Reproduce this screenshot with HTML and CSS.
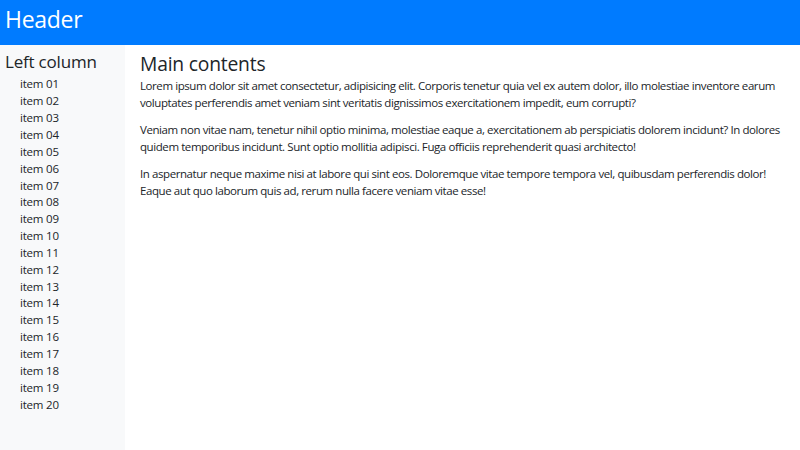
FILE: index.html
```html
<!DOCTYPE html>
<html lang="en">
<head>
<meta charset="utf-8">
<title>Layout</title>
<link rel="stylesheet" href="styles.css">
</head>
<body>
<header class="header">
  <h1 class="header-title">Header</h1>
</header>
<div class="layout">
  <aside class="sidebar">
    <h2 class="sidebar-title">Left column</h2>
    <ul class="item-list">
      <li>item 01</li>
      <li>item 02</li>
      <li>item 03</li>
      <li>item 04</li>
      <li>item 05</li>
      <li>item 06</li>
      <li>item 07</li>
      <li>item 08</li>
      <li>item 09</li>
      <li>item 10</li>
      <li>item 11</li>
      <li>item 12</li>
      <li>item 13</li>
      <li>item 14</li>
      <li>item 15</li>
      <li>item 16</li>
      <li>item 17</li>
      <li>item 18</li>
      <li>item 19</li>
      <li>item 20</li>
    </ul>
  </aside>
  <main class="main">
    <h2 class="main-title">Main contents</h2>
    <p>Lorem ipsum dolor sit amet consectetur, adipisicing elit. Corporis tenetur quia vel ex autem dolor, illo molestiae inventore earum voluptates perferendis amet veniam sint veritatis dignissimos exercitationem impedit, eum corrupti?</p>
    <p>Veniam non vitae nam, tenetur nihil optio minima, molestiae eaque a, exercitationem ab perspiciatis dolorem incidunt? In dolores quidem temporibus incidunt. Sunt optio mollitia adipisci. Fuga officiis reprehenderit quasi architecto!</p>
    <p>In aspernatur neque maxime nisi at labore qui sint eos. Doloremque vitae tempore tempora vel, quibusdam perferendis dolor! Eaque aut quo laborum quis ad, rerum nulla facere veniam vitae esse!</p>
  </main>
</div>
</body>
</html>
```

FILE: styles.css
```css
* { box-sizing: border-box; }
html, body { height: 100%; }
body {
  margin: 0;
  font-family: "Open Sans", "Noto Sans", sans-serif;
  font-size: 11.5px;
  letter-spacing: -0.42px;
  color: #212529;
  background: #fff;
  display: flex;
  flex-direction: column;
}
.header {
  background: #007bff;
  height: 45px;
  flex: none;
  padding: 6px 5px 0;
}
.header-title {
  margin: 0;
  font-size: 23px;
  font-weight: 400;
  letter-spacing: -0.3px;
  color: #fff;
  line-height: 1.2;
}
.layout {
  flex: 1;
  display: flex;
}
.sidebar {
  width: 125px;
  flex: none;
  background: #f8f9fa;
  padding: 6.5px 5px;
}
.sidebar-title {
  margin: 0 0 4.6px;
  font-size: 17px;
  font-weight: 400;
  letter-spacing: -0.2px;
  line-height: 1.2;
}
.item-list {
  list-style: none;
  margin: 0;
  padding-left: 15px;
  line-height: 16.85px;
  letter-spacing: -0.2px;
}
.main {
  flex: 1;
  padding: 6.8px 15px;
}
.main-title {
  margin: 0 0 3.4px;
  font-size: 19.3px;
  font-weight: 400;
  letter-spacing: -0.2px;
  line-height: 1.2;
}
.main p {
  margin: 0 0 10.2px;
  line-height: 16.85px;
}
```
